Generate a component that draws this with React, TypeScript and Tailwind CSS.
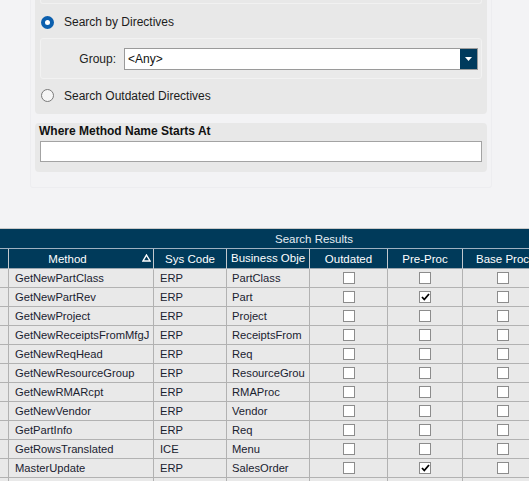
import React from 'react'

type Row = {
  method: string
  sys: string
  obj: string
  outdated: boolean
  pre: boolean
  base: boolean
}

const rows: Row[] = [
  { method: 'GetNewPartClass', sys: 'ERP', obj: 'PartClass', outdated: false, pre: false, base: false },
  { method: 'GetNewPartRev', sys: 'ERP', obj: 'Part', outdated: false, pre: true, base: false },
  { method: 'GetNewProject', sys: 'ERP', obj: 'Project', outdated: false, pre: false, base: false },
  { method: 'GetNewReceiptsFromMfgJ', sys: 'ERP', obj: 'ReceiptsFrom', outdated: false, pre: false, base: false },
  { method: 'GetNewReqHead', sys: 'ERP', obj: 'Req', outdated: false, pre: false, base: false },
  { method: 'GetNewResourceGroup', sys: 'ERP', obj: 'ResourceGrou', outdated: false, pre: false, base: false },
  { method: 'GetNewRMARcpt', sys: 'ERP', obj: 'RMAProc', outdated: false, pre: false, base: false },
  { method: 'GetNewVendor', sys: 'ERP', obj: 'Vendor', outdated: false, pre: false, base: false },
  { method: 'GetPartInfo', sys: 'ERP', obj: 'Req', outdated: false, pre: false, base: false },
  { method: 'GetRowsTranslated', sys: 'ICE', obj: 'Menu', outdated: false, pre: false, base: false },
  { method: 'MasterUpdate', sys: 'ERP', obj: 'SalesOrder', outdated: false, pre: true, base: false },
  { method: '', sys: '', obj: '', outdated: false, pre: false, base: false },
]

function Radio({ checked }: { checked: boolean }) {
  return checked ? (
    <span className="w-[13px] h-[13px] rounded-full bg-[#0b5fae] flex items-center justify-center shrink-0">
      <span className="w-[5px] h-[5px] rounded-full bg-white" />
    </span>
  ) : (
    <span className="w-[13px] h-[13px] rounded-full border border-[#7a7a7a] bg-[#f6f6f6] shrink-0" />
  )
}

function Check({ checked }: { checked: boolean }) {
  return (
    <span className="w-[12px] h-[12px] border border-[#8c8c8c] bg-white flex items-center justify-center">
      {checked && (
        <svg width="9" height="8" viewBox="0 0 9 8">
          <path d="M1 4 L3.3 6.5 L8 1" fill="none" stroke="#000" strokeWidth="1.8" />
        </svg>
      )}
    </span>
  )
}

// column widths: gutter, method, sys code, business obj, outdated, pre-proc, base proc
const cols = 'grid grid-cols-[9px_145px_73px_83px_78px_75px_80px]'

export default function App() {
  return (
    <div
      className="w-[529px] h-[481px] overflow-hidden bg-[#f3f3f5] text-[12px] text-[#1b1b1b]"
      style={{ fontFamily: '"Liberation Sans", Arial, sans-serif' }}
    >
      {/* Search options */}
      <div className="ml-[30px] w-[462px] h-[188px] px-[4px] border-x border-b border-[#ededf0] rounded-b-[3px]">
        <div className="bg-[#e8e8e8] rounded-b-[4px] px-[5px] pb-[8px]">
          <div className="h-[4px] border-x border-b border-[#f1f1f1] rounded-b-[3px]" />

          <div className="flex items-center gap-[10px] pl-[1px] h-[34px] pt-[2px]">
            <Radio checked />
            <span className="text-[#1c1c1c]">Search by Directives</span>
          </div>

          <div className="h-[41px] bg-[#eaeaea] border border-[#f2f2f2] rounded-[3px] flex items-center">
            <span className="w-[83px] text-right pr-[8px] text-[#222]">Group:</span>
            <div className="w-[354px] h-[22px] flex border border-[#9a9a9a] bg-white">
              <span className="flex-1 pl-[3px] leading-[20px] text-[#111]">&lt;Any&gt;</span>
              <span className="w-[17px] h-full bg-[#003a5c] flex items-center justify-center">
                <svg width="7" height="4" viewBox="0 0 7 4">
                  <path d="M0 0 H7 L3.5 4 Z" fill="#fff" />
                </svg>
              </span>
            </div>
          </div>

          <div className="flex items-center gap-[10px] pl-[1px] h-[27px] pt-[6px]">
            <Radio checked={false} />
            <span className="text-[#1c1c1c]">Search Outdated Directives</span>
          </div>
        </div>

        <div className="mt-[9px] h-[49px] bg-[#e8e8e8] rounded-[4px] px-[5px] pt-[1px]">
          <div className="font-bold leading-[15px] -ml-[1px] text-[#111]">Where Method Name Starts At</div>
          <div className="mt-[2px] h-[21px] bg-white border border-[#a3a3a3]" />
        </div>
      </div>

      {/* Results grid */}
      <div className="mt-[40px] w-[543px] border-t border-[#c9c9c9]">
        <div className="h-[20px] bg-[#003a5a] text-[#e6edf3] text-[11.5px] leading-[21px] pl-[275px] border-b border-[#9fb1c1]">
          Search Results
        </div>
        <div className={`${cols} h-[20px] bg-[#003a5a] text-white text-[11.5px] border-b border-[#9aa6b0]`}>
          <div className="border-r border-[#c3c9ce]" />
          <div className="relative border-r border-[#c3c9ce] text-center pr-[27px] leading-[21px]">
            Method
            <svg className="absolute right-[2px] top-[5px]" width="9" height="8" viewBox="0 0 9 8">
              <path d="M4.5 1 L8 7 H1 Z" fill="none" stroke="#fff" strokeWidth="1.4" />
            </svg>
          </div>
          <div className="border-r border-[#c3c9ce] text-center leading-[21px]">Sys Code</div>
          <div className="border-r border-[#c3c9ce] pl-[4px] leading-[18px] overflow-hidden whitespace-nowrap">Business Obje</div>
          <div className="border-r border-[#c3c9ce] text-center leading-[21px]">Outdated</div>
          <div className="border-r border-[#c3c9ce] text-center leading-[21px]">Pre-Proc</div>
          <div className="border-r border-[#c3c9ce] text-center leading-[21px]">Base Proc</div>
        </div>

        {rows.map((r, i) => (
          <div key={i} className={`${cols} h-[19px] bg-[#e9e9e9] border-b border-[#b2b2b2] text-[#1a2230] text-[11.2px]`}>
            <div className="border-r border-[#b2b2b2]" />
            <div className="border-r border-[#b2b2b2] pl-[6px] leading-[18px] overflow-hidden whitespace-nowrap">{r.method}</div>
            <div className="border-r border-[#b2b2b2] pl-[6px] leading-[18px] overflow-hidden whitespace-nowrap">{r.sys}</div>
            <div className="border-r border-[#b2b2b2] pl-[5px] leading-[18px] overflow-hidden whitespace-nowrap">{r.obj}</div>
            <div className="border-r border-[#b2b2b2] flex items-center justify-center">
              {r.method && <Check checked={r.outdated} />}
            </div>
            <div className="border-r border-[#b2b2b2] flex items-center justify-center">
              {r.method && <Check checked={r.pre} />}
            </div>
            <div className="border-r border-[#b2b2b2] flex items-center justify-center">
              {r.method && <Check checked={r.base} />}
            </div>
          </div>
        ))}
      </div>
    </div>
  )
}
